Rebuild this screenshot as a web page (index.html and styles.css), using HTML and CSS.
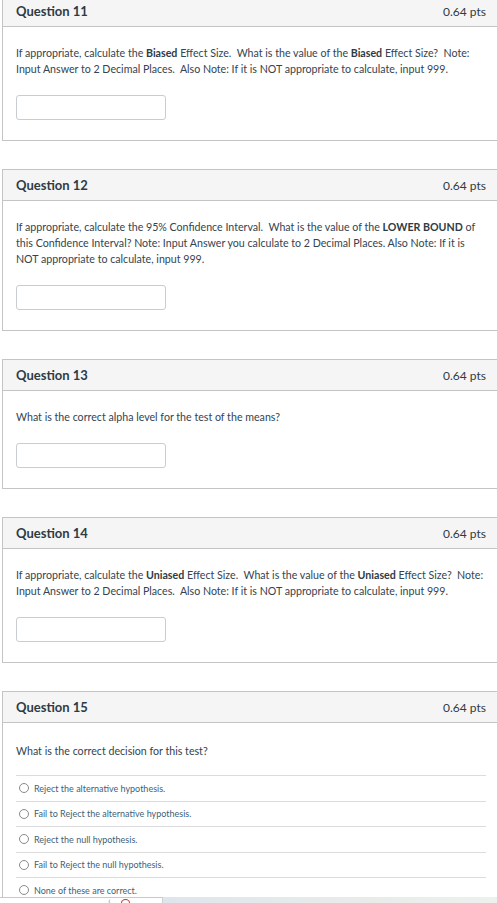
FILE: index.html
```html
<!DOCTYPE html>
<html lang="en">
<head>
<meta charset="utf-8">
<title>Quiz</title>
<link rel="stylesheet" href="styles.css">
</head>
<body>
<main class="quiz">
  <section class="card first">
    <header class="card-head"><span class="q-title">Question 11</span><span class="q-pts">0.64 pts</span></header>
    <div class="card-body">
      <p class="q-text">If appropriate, calculate the <b>Biased</b> Effect Size.&nbsp; What is the value of the <b>Biased</b> Effect Size?&nbsp; Note: Input Answer to 2 Decimal Places.&nbsp; Also Note: If it is NOT appropriate to calculate, input 999.</p>
      <input class="answer" type="text" aria-label="answer">
    </div>
  </section>

  <section class="card">
    <header class="card-head"><span class="q-title">Question 12</span><span class="q-pts">0.64 pts</span></header>
    <div class="card-body">
      <p class="q-text">If appropriate, calculate the 95% Confidence Interval.&nbsp; What is the value of the <b>LOWER BOUND</b> of this Confidence Interval? Note: Input Answer you calculate to 2 Decimal Places. Also Note: If it is NOT appropriate to calculate, input 999.</p>
      <input class="answer" type="text" aria-label="answer">
    </div>
  </section>

  <section class="card">
    <header class="card-head"><span class="q-title">Question 13</span><span class="q-pts">0.64 pts</span></header>
    <div class="card-body">
      <p class="q-text">What is the correct alpha level for the test of the means?</p>
      <input class="answer" type="text" aria-label="answer">
    </div>
  </section>

  <section class="card">
    <header class="card-head"><span class="q-title">Question 14</span><span class="q-pts">0.64 pts</span></header>
    <div class="card-body">
      <p class="q-text">If appropriate, calculate the <b>Uniased</b> Effect Size.&nbsp; What is the value of the <b>Uniased</b> Effect Size?&nbsp; Note: Input Answer to 2 Decimal Places.&nbsp; Also Note: If it is NOT appropriate to calculate, input 999.</p>
      <input class="answer" type="text" aria-label="answer">
    </div>
  </section>

  <section class="card">
    <header class="card-head"><span class="q-title">Question 15</span><span class="q-pts">0.64 pts</span></header>
    <div class="card-body mc">
      <p class="q-text">What is the correct decision for this test?</p>
      <ul class="options">
        <li class="option"><span class="radio"></span>Reject the alternative hypothesis.</li>
        <li class="option"><span class="radio"></span>Fail to Reject the alternative hypothesis.</li>
        <li class="option"><span class="radio"></span>Reject the null hypothesis.</li>
        <li class="option"><span class="radio"></span>Fail to Reject the null hypothesis.</li>
        <li class="option"><span class="radio"></span>None of these are correct.</li>
      </ul>
    </div>
  </section>
</main>
<div class="bottom-strip">
  <div class="strip-left"><span class="chev">‹</span><span class="caret"></span></div>
  <div class="strip-right"></div>
</div>
</body>
</html>
```

FILE: styles.css
```css
html, body {
  margin: 0;
  padding: 0;
  background: #ffffff;
  overflow: hidden;
}
body {
  font-family: Lato, "Noto Sans", sans-serif;
  color: #2d3b45;
  width: 497px;
  height: 903px;
  position: relative;
}
.quiz {
  display: flex;
  flex-direction: column;
  gap: 28px;
  padding-left: 2px;
  width: 497px;
}
.card {
  border: 1px solid #c4c4c4;
  width: 497px;
  box-sizing: border-box;
  background: #fff;
}
.card.first {
  margin-top: -5px;
}
.card-head {
  display: flex;
  justify-content: space-between;
  align-items: center;
  height: 30px;
  padding: 0 12px 0 13px;
  background: #f5f5f5;
  border-bottom: 1px solid #c4c4c4;
}
.q-title {
  font-size: 13px;
  font-weight: 700;
  color: #2d3b45;
}
.q-pts {
  font-size: 12px;
  color: #2d3b45;
}
.card-body {
  padding: 18px 12px 20px 13px;
}
.q-text {
  margin: 0 0 18px;
  font-size: 10.65px;
  line-height: 16px;
  color: #34444f;
}
.q-text b {
  font-weight: 700;
  color: #2d3b45;
}
.answer {
  display: block;
  width: 150px;
  height: 25px;
  box-sizing: border-box;
  margin: 0;
  border: 1px solid #c7cdd1;
  border-radius: 3px;
  background: #fff;
}
.card-body.mc {
  padding-top: 20px;
}
.mc .q-text {
  margin-bottom: 16px;
}
.options {
  list-style: none;
  margin: 0;
  padding: 0;
}
.option {
  display: flex;
  align-items: center;
  gap: 5px;
  height: 25.5px;
  box-sizing: border-box;
  border-top: 1px solid #dcdcdc;
  padding-left: 3px;
  font-size: 9px;
  color: #3f5f78;
}
.radio {
  width: 8px;
  height: 8px;
  border: 1px solid #8a8a8a;
  border-radius: 50%;
  background: #fff;
  flex: none;
}
.bottom-strip {
  position: absolute;
  left: 0;
  right: 0;
  bottom: 0;
  height: 6px;
  display: flex;
}
.strip-left {
  width: 162px;
  background: #fff;
  border-top: 1px solid #c8c8c8;
  border-right: 1px solid #d0d0d0;
  position: relative;
  overflow: hidden;
}
.chev {
  position: absolute;
  left: 108px;
  top: -3px;
  font-size: 10px;
  color: #9a9a9a;
  line-height: 10px;
}
.caret {
  position: absolute;
  left: 121px;
  top: 1px;
  width: 7px;
  height: 7px;
  border: 1px solid #c0392b;
  border-radius: 50% 50% 0 0;
  border-bottom: none;
}
.strip-right {
  flex: 1;
  background: linear-gradient(90deg, #dfe5ec, #e8ece9 60%, #eef0ee);
}
```
